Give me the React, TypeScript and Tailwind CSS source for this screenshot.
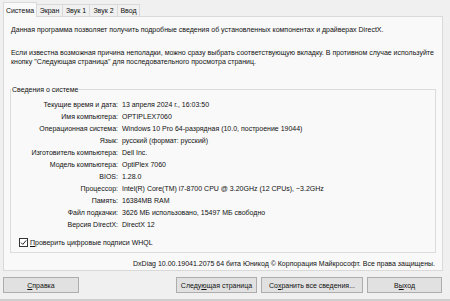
import React from "react";

const rows: [string, string][] = [
  ["Текущие время и дата:", "13 апреля 2024 г., 16:03:50"],
  ["Имя компьютера:", "OPTIPLEX7060"],
  ["Операционная система:", "Windows 10 Pro 64-разрядная (10.0, построение 19044)"],
  ["Язык:", "русский (формат: русский)"],
  ["Изготовитель компьютера:", "Dell Inc."],
  ["Модель компьютера:", "OptiPlex 7060"],
  ["BIOS:", "1.28.0"],
  ["Процессор:", "Intel(R) Core(TM) i7-8700 CPU @ 3.20GHz (12 CPUs), ~3.2GHz"],
  ["Память:", "16384MB RAM"],
  ["Файл подкачки:", "3626 МБ использовано, 15497 МБ свободно"],
  ["Версия DirectX:", "DirectX 12"],
];

function Btn({ children, w }: { children: React.ReactNode; w: string }) {
  return (
    <div
      className={`${w} h-[16px] flex items-center justify-center bg-[#e1e1e1] border border-[#adadad] text-[7px] leading-[9px]`}
    >
      {children}
    </div>
  );
}

export default function App() {
  return (
    <div
      className="w-[450px] h-[301px] bg-[#f0f0f0] text-[#111111] flex flex-col overflow-hidden"
      style={{ fontFamily: '"Liberation Sans", Arial, sans-serif' }}
    >
      {/* tabs */}
      <div className="flex items-end pl-[3px] pt-[2px] h-[16px] text-[7px] leading-[9px]">
        <div className="w-[34px] h-[15px] bg-[#f9f9f9] border border-b-0 border-[#d9d9d9] flex items-center justify-center relative top-[1px] z-10">
          Система
        </div>
        <div className="w-[26px] h-[12px] border border-l-0 border-b-0 border-[#d9d9d9] flex items-center justify-center">
          Экран
        </div>
        <div className="w-[27px] h-[12px] border border-l-0 border-b-0 border-[#d9d9d9] flex items-center justify-center">
          Звук 1
        </div>
        <div className="w-[28px] h-[12px] border border-l-0 border-b-0 border-[#d9d9d9] flex items-center justify-center">
          Звук 2
        </div>
        <div className="w-[22px] h-[12px] border border-l-0 border-b-0 border-[#d9d9d9] flex items-center justify-center">
          Ввод
        </div>
      </div>

      {/* panel */}
      <div className="ml-[3px] w-[440px] h-[255px] bg-[#f9f9f9] border border-[#d9d9d9] flex flex-col text-[7px] leading-[9px]">
        <p className="pl-[7px] pt-[8px]">
          Данная программа позволяет получить подробные сведения об установленных компонентах и драйверах DirectX.
        </p>
        <p className="pl-[7px] mt-[14px]">
          Если известна возможная причина неполадки, можно сразу выбрать соответствующую вкладку. В противном случае используйте
          <br />
          кнопку "Следующая страница" для последовательного просмотра страниц.
        </p>

        <fieldset className="mx-[6px] mt-[19px] border border-[#dcdcdc] pb-[5px]">
          <legend className="px-[1px] leading-[9px]">Сведения о системе</legend>
          <div className="flex flex-col pt-[4px]">
            {rows.map(([k, v]) => (
              <div key={k} className="flex h-[12px] items-center">
                <div className="w-[107px] text-right shrink-0">{k}</div>
                <div className="pl-[4px] whitespace-nowrap">{v}</div>
              </div>
            ))}
          </div>
          <div className="flex items-center mt-[7px] pl-[8px] h-[10px]">
            <div className="w-[9px] h-[9px] border border-[#333333] bg-white flex items-center justify-center">
              <svg width="7" height="7" viewBox="0 0 7 7">
                <path d="M1 3.6 L2.8 5.4 L6.2 1.4" fill="none" stroke="#222" strokeWidth="1" />
              </svg>
            </div>
            <span className="pl-[2px]">
              <span className="underline">П</span>роверить цифровые подписи WHQL
            </span>
          </div>
        </fieldset>

        <div className="mt-auto mb-[2px] pr-[7px] text-right whitespace-nowrap">
          DxDiag 10.00.19041.2075 64 бита Юникод © Корпорация Майкрософт. Все права защищены.
        </div>
      </div>

      {/* buttons */}
      <div className="flex items-center pl-[3px] pr-[8px] mt-[6px]">
        <Btn w="w-[76px]">
          <span className="underline">С</span>правка
        </Btn>
        <div className="flex-1" />
        <div className="flex gap-[4px]">
          <Btn w="w-[81px]">
            <span>
              Следу<span className="underline">ю</span>щая страница
            </span>
          </Btn>
          <Btn w="w-[102px]">
            <span>
              Со<span className="underline">х</span>ранить все сведения...
            </span>
          </Btn>
          <Btn w="w-[75px]">
            <span>
              В<span className="underline">ы</span>ход
            </span>
          </Btn>
        </div>
      </div>
      <div className="mt-auto h-[2px] bg-[#cfcfcf]" />
    </div>
  );
}
